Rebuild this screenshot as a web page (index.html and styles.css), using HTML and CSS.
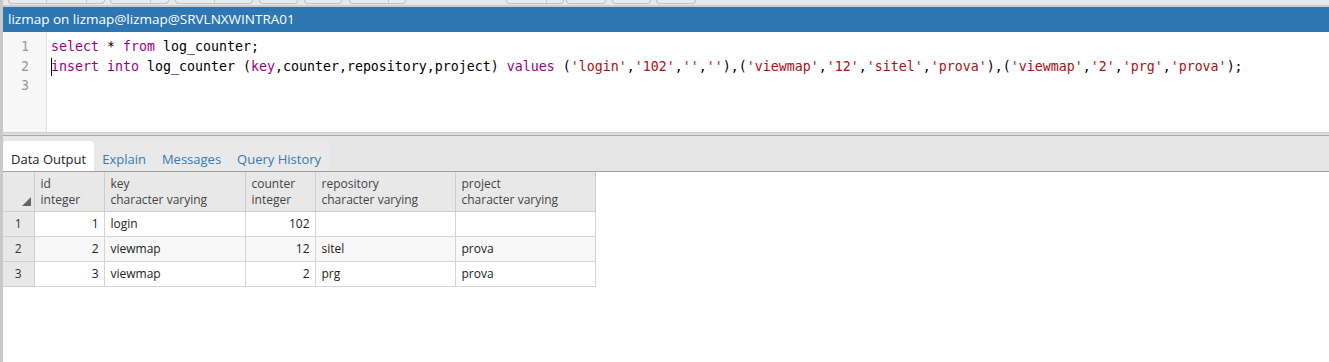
FILE: index.html
```html
<!DOCTYPE html>
<html>
<head>
<meta charset="utf-8">
<title>pgAdmin query</title>
<link rel="stylesheet" href="styles.css">
</head>
<body>
<div class="app">
  <div class="toolbar">
    <div class="grp"><span class="seg s38"></span><span class="seg s40"></span><span class="seg s18"></span></div>
    <div class="grp gap5"><span class="seg s40"></span><span class="seg s18"></span></div>
    <div class="grp"><span class="seg s39"></span><span class="seg s38"></span></div>
    <div class="grp"><span class="seg s38"></span></div>
    <div class="grp"><span class="seg s37"></span></div>
    <div class="grp gap7"><span class="seg s39"></span><span class="seg s17"></span></div>
    <div class="grp gap100"><span class="seg s40"></span><span class="seg s17"></span></div>
    <div class="grp gap2"><span class="seg s39"></span></div>
    <div class="grp"><span class="seg s38"></span></div>
    <div class="grp gap5"><span class="seg s39"></span></div>
  </div>
  <div class="titlebar">lizmap on lizmap@lizmap@SRVLNXWINTRA01</div>
  <div class="editor">
    <div class="gutter">
      <div class="ln">1</div>
      <div class="ln">2</div>
      <div class="ln">3</div>
    </div>
    <div class="code">
      <div class="line"><span class="kw">select</span> * <span class="kw">from</span> log_counter;</div>
      <div class="line cursor-line"><span class="kw">insert</span> <span class="kw">into</span> log_counter (<span class="kw">key</span>,counter,repository,project) <span class="kw">values</span> (<span class="str">'login'</span>,<span class="str">'102'</span>,<span class="str">''</span>,<span class="str">''</span>),(<span class="str">'viewmap'</span>,<span class="str">'12'</span>,<span class="str">'sitel'</span>,<span class="str">'prova'</span>),(<span class="str">'viewmap'</span>,<span class="str">'2'</span>,<span class="str">'prg'</span>,<span class="str">'prova'</span>);</div>
      <div class="line"> </div>
    </div>
  </div>
  <div class="splitter"></div>
  <div class="tabs">
    <div class="tab active">Data Output</div>
    <div class="tab">Explain</div>
    <div class="tab">Messages</div>
    <div class="tab">Query History</div>
  </div>
  <div class="results">
    <table class="grid">
      <colgroup>
        <col class="c-rn"><col class="c-id"><col class="c-key"><col class="c-cnt"><col class="c-repo"><col class="c-proj">
      </colgroup>
      <thead>
        <tr>
          <th class="rn-head"><svg class="sort" width="10" height="10" viewBox="0 0 10 10"><polygon points="10,1 10,10 1,10" fill="#666"/></svg></th>
          <th>id<br>integer</th>
          <th>key<br>character varying</th>
          <th>counter<br>integer</th>
          <th>repository<br>character varying</th>
          <th>project<br>character varying</th>
        </tr>
      </thead>
      <tbody>
        <tr>
          <td class="rn">1</td><td class="num">1</td><td>login</td><td class="num">102</td><td></td><td></td>
        </tr>
        <tr class="alt">
          <td class="rn">2</td><td class="num">2</td><td>viewmap</td><td class="num">12</td><td>sitel</td><td>prova</td>
        </tr>
        <tr>
          <td class="rn">3</td><td class="num">3</td><td>viewmap</td><td class="num">2</td><td>prg</td><td>prova</td>
        </tr>
      </tbody>
    </table>
  </div>
</div>
</body>
</html>
```

FILE: styles.css
```css
html, body {
  margin: 0;
  padding: 0;
  background: #ffffff;
}

body {
  font-family: "Open Sans", "Liberation Sans", sans-serif;
  color: #222;
}

.app {
  border-left: 3px solid #c8c8c8;
  height: 362px;
  box-sizing: border-box;
  overflow: hidden;
  background: #fff;
}

/* top toolbar (mostly cut off) */
.toolbar {
  height: 5px;
  background: #e8e8e8;
  border-bottom: 2px solid #cbcbcb;
  display: flex;
  align-items: flex-end;
  padding-left: 5px;
  overflow: hidden;
}

.grp {
  display: flex;
  height: 12px;
  margin-left: 6px;
  margin-bottom: 1px;
  border: 1px solid #c2c2c2;
  border-top: none;
  border-radius: 0 0 4px 4px;
  background: #ebebeb;
  box-sizing: border-box;
}

.grp:first-child { margin-left: 0; }
.grp.gap5 { margin-left: 5px; }
.grp.gap7 { margin-left: 7px; }
.grp.gap100 { margin-left: 100px; }
.grp.gap2 { margin-left: 2px; }

.seg {
  display: block;
  height: 100%;
  border-right: 1px solid #c8c8c8;
}
.seg:last-child { border-right: none; }
.s17 { width: 16px; }
.s18 { width: 17px; }
.s37 { width: 36px; }
.s38 { width: 37px; }
.s39 { width: 38px; }
.s40 { width: 39px; }

/* title bar */
.titlebar {
  height: 25px;
  line-height: 25px;
  background: #2d76b1;
  color: #fff;
  font-size: 13.5px;
  padding-left: 5px;
}

/* editor */
.editor {
  display: flex;
  height: 100px;
  background: #fff;
}

.gutter {
  width: 43px;
  background: #f7f7f7;
  border-right: 1px solid #ddd;
  padding-top: 5px;
  box-sizing: content-box;
}

.ln {
  height: 19.5px;
  line-height: 19.5px;
  text-align: right;
  padding-right: 17px;
  color: #999;
  font-family: "DejaVu Sans Mono", "Liberation Mono", monospace;
  font-size: 13.29px;
}

.code {
  flex: 1;
  padding-top: 5px;
  padding-left: 4px;
  font-family: "DejaVu Sans Mono", "Liberation Mono", monospace;
  font-size: 13.29px;
  color: #000;
}

.line {
  height: 19.5px;
  line-height: 19.5px;
  white-space: pre;
}

.cursor-line {
  position: relative;
}
.cursor-line::before {
  content: "";
  position: absolute;
  left: 0;
  top: 1px;
  height: 18px;
  border-left: 1px solid #000;
}

.kw { color: #990088; }
.str { color: #aa1111; }

/* splitter between editor and output */
.splitter {
  height: 2px;
  background: #dcdcdc;
  border-top: 1px solid #cfcfcf;
  border-bottom: 1px solid #a9a9a9;
}

/* tabs */
.tabs {
  height: 35px;
  background: #e6e6e6;
  border-bottom: 1px solid #a0a0a0;
  display: flex;
  align-items: flex-end;
  box-sizing: content-box;
}

.tab {
  height: 30px;
  box-sizing: border-box;
  padding: 6px 8px 0 8px;
  line-height: 24px;
  font-size: 13px;
  color: #337ab7;
  border-radius: 4px 4px 0 0;
  background: #e9e9e9;
}

.tab.active {
  background: #fff;
  color: #222;
}

/* results grid */
.results {
  background: #fff;
}

.grid {
  border-collapse: collapse;
  table-layout: fixed;
  font-size: 12px;
}

.c-rn { width: 31px; }
.c-id { width: 70px; }
.c-key { width: 141px; }
.c-cnt { width: 70px; }
.c-repo { width: 140px; }
.c-proj { width: 140px; }

.grid th {
  background: #e8e8e8;
  border: 1px solid #cdcdcd;
  border-top: none;
  font-weight: normal;
  color: #444;
  text-align: left;
  vertical-align: top;
  line-height: 16px;
  height: 39px;
  padding: 4px 6px 0 6px;
  box-sizing: border-box;
}

.grid th.rn-head {
  border-left: none;
  position: relative;
  padding: 0;
}

.sort {
  position: absolute;
  right: 3px;
  bottom: 5px;
}

.grid td {
  border: 1px solid #d4d4d4;
  height: 25px;
  padding: 0 6px;
  line-height: 24px;
  color: #222;
  box-sizing: border-box;
  white-space: nowrap;
}

.grid td.num {
  text-align: right;
  padding-right: 5px;
}

.grid td.rn {
  background: #e8e8e8;
  border-left: none;
  border-color: #cdcdcd;
  text-align: center;
  color: #333;
}

.grid tr.alt td {
  background: #f8f8f8;
}
.grid tr.alt td.rn {
  background: #e8e8e8;
}
```
